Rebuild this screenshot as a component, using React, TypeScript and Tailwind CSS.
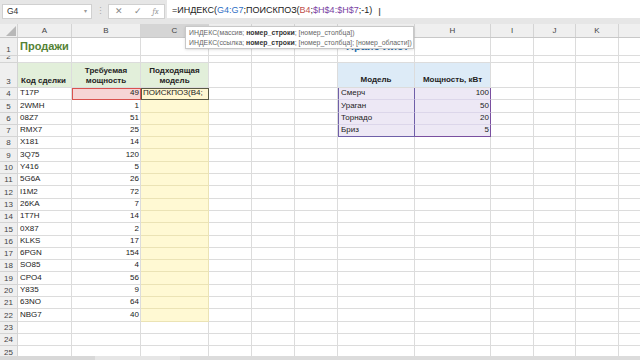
import React from 'react';

const sales: [string, number][] = [
  ['T17P', 49],
  ['2WMH', 1],
  ['08Z7', 51],
  ['RMX7', 25],
  ['X181', 14],
  ['3Q75', 120],
  ['Y416', 5],
  ['5G6A', 26],
  ['I1M2', 72],
  ['26KA', 7],
  ['1T7H', 14],
  ['0X87', 2],
  ['KLKS', 17],
  ['6PGN', 154],
  ['SO85', 4],
  ['CPO4', 56],
  ['Y835', 9],
  ['63NO', 64],
  ['NBG7', 40],
];

const prices: [string, number][] = [
  ['Смерч', 100],
  ['Ураган', 50],
  ['Торнадо', 20],
  ['Бриз', 5],
];

const cols = ['A', 'B', 'C', 'D', 'E', 'F', 'G', 'H', 'I', 'J', 'K', 'L'];
const colWidths = [54, 69, 68, 43, 43, 43, 77, 76, 43, 42, 43, 60];

function rowHeight(r: number) {
  if (r === 1) return 18;
  if (r === 2) return 7;
  if (r === 3) return 25;
  return 12.3;
}

function Cell({ r, c }: { r: number; c: number }) {
  const col = cols[c];
  const w = colWidths[c];
  let cls = 'border-r border-b border-[#dcdcdc] bg-white';
  let content: React.ReactNode = null;
  const base = 'h-full overflow-visible whitespace-nowrap flex items-end';

  if (r === 1 && col === 'A') {
    content = (
      <div className={`${base} pl-[2px] pb-[1px] text-[11px] font-bold text-[#548235]`}>Продажи</div>
    );
  }
  if (r === 1 && col === 'G') {
    content = (
      <div className={`${base} pl-[8px] pb-[1px] text-[11px] font-bold text-[#2e75b6]`}>Прайс-лист</div>
    );
  }
  if (r === 3 && (col === 'A' || col === 'B' || col === 'C')) {
    cls = 'border-r border-b border-[#dcdcdc] bg-[#e2efda]';
    const label =
      col === 'A' ? 'Код сделки' : col === 'B' ? 'Требуемая\nмощность' : 'Подходящая\nмодель';
    content = (
      <div
        className={`h-full flex items-end pb-[1px] text-[8px] font-bold leading-[10px] text-[#222] whitespace-pre ${
          col === 'A' ? 'pl-[3px]' : 'justify-center text-center'
        }`}
      >
        {label}
      </div>
    );
  }
  if (r === 3 && (col === 'G' || col === 'H')) {
    cls = 'border-r border-b border-[#dcdcdc] bg-[#ddebf7]';
    content = (
      <div className="h-full flex items-end justify-center pb-[1px] text-[8px] font-bold text-[#222]">
        {col === 'G' ? 'Модель' : 'Мощность, кВт'}
      </div>
    );
  }
  const si = r - 4;
  if (si >= 0 && si < sales.length) {
    if (col === 'A') {
      content = <div className={`${base} pl-[2px] text-[8px] text-[#222]`}>{sales[si][0]}</div>;
    }
    if (col === 'B') {
      if (si === 0) cls = 'border border-[#d9534f] bg-[#f6d5d5]';
      content = (
        <div className={`${base} justify-end pr-[1px] text-[8px] text-[#222]`}>{sales[si][1]}</div>
      );
    }
    if (col === 'C') {
      if (si === 0) {
        cls = 'border border-[#5a5a45] bg-[#fff7d1] relative z-10';
        content = <div className={`${base} pl-[1px] text-[8px] text-[#222]`}>ПОИСКПОЗ(B4;</div>;
      } else {
        cls = 'border-r border-b border-[#ebe3b5] bg-[#fff9d3]';
      }
    }
  }
  const pi = r - 4;
  if (pi >= 0 && pi < prices.length && (col === 'G' || col === 'H')) {
    const last = pi === prices.length - 1;
    if (col === 'G') {
      cls = `border-l border-r border-[#6f5fa8] bg-[#ede8f5] ${last ? 'border-b' : 'border-b border-b-[#dcd6ea]'}`;
      content = <div className={`${base} pl-[2px] text-[8px] text-[#222]`}>{prices[pi][0]}</div>;
    } else {
      cls = `border-r border-[#7a4fa0] bg-[#ede8f5] ${last ? 'border-b' : 'border-b border-b-[#dcd6ea]'}`;
      content = (
        <div className={`${base} justify-end pr-[1px] text-[8px] text-[#222]`}>{prices[pi][1]}</div>
      );
    }
  }
  return (
    <div className={`${cls} box-border shrink-0`} style={{ width: w, height: rowHeight(r) }}>
      {content}
    </div>
  );
}

function RowHeader({ r }: { r: number }) {
  return (
    <div
      className="w-[18px] shrink-0 bg-[#efefef] border-r border-b border-[#d4d4d4] flex items-end justify-center text-[8px] leading-[10px] text-[#444] overflow-hidden box-border"
      style={{ height: rowHeight(r) }}
    >
      {r}
    </div>
  );
}

export default function App() {
  const rows = Array.from({ length: 25 }, (_, i) => i + 1);
  return (
    <div
      className="w-[640px] h-[360px] overflow-hidden relative bg-white"
      style={{ fontFamily: '"Liberation Sans", Arial, sans-serif' }}
    >
      {/* formula bar */}
      <div className="h-[24px] bg-[#e6e6e6] flex items-start pt-[4px] gap-0">
        <div className="ml-[2px] w-[90px] h-[15px] bg-white border border-[#d0d0d0] flex items-center justify-between px-[4px] text-[8.5px] text-[#333]">
          <span>G4</span>
          <span className="text-[6px] text-[#999]">▾</span>
        </div>
        <div className="w-[16px] h-[15px] flex items-center justify-center text-[9px] text-[#aaa]">⋮</div>
        <div className="w-[57px] h-[15px] bg-white border border-[#d0d0d0] flex items-center justify-around text-[9px] text-[#888]">
          <span>✕</span>
          <span>✓</span>
          <span className="italic font-serif text-[8px] text-[#999]">fx</span>
        </div>
        <div className="flex-1 ml-[2px] h-[18px] -mt-[4px] pt-[4px] bg-white flex items-center pl-[5px] text-[9px] text-[#222] relative">
          <span>=ИНДЕКС(</span>
          <span className="text-[#2f6fc4]">G4:G7</span>
          <span>;ПОИСКПОЗ(</span>
          <span className="text-[#c0504d]">B4</span>
          <span>;</span>
          <span className="text-[#7a3fa3]">$H$4:$H$7</span>
          <span>;-1)</span>
          <span className="absolute left-[211px] top-[4px] text-[11px] text-[#555] font-light">I</span>
        </div>
      </div>

      {/* column headers */}
      <div className="flex h-[13px] bg-[#efefef] border-b border-[#c8c8c8] box-content">
        <div className="w-[18px] shrink-0 border-r border-[#d4d4d4] relative">
          <svg width="12" height="10" className="absolute right-[1px] bottom-[1px]">
            <polygon points="12,0 12,10 2,10" fill="#b8b8b8" />
          </svg>
        </div>
        {cols.map((c, i) => (
          <div
            key={c}
            className={`shrink-0 border-r border-[#d4d4d4] flex items-center justify-center text-[8px] text-[#444] ${
              c === 'C' ? 'bg-[#d5d5d5] text-[#222]' : ''
            }`}
            style={{ width: colWidths[i] }}
          >
            {c}
          </div>
        ))}
      </div>

      {/* grid */}
      <div className="flex flex-col">
        {rows.map((r) => (
          <div key={r} className="flex">
            <RowHeader r={r} />
            {cols.map((_, c) => (
              <Cell key={c} r={r} c={c} />
            ))}
          </div>
        ))}
      </div>

      {/* tooltip */}
      <div className="absolute left-[185px] top-[26px] w-[229px] h-[23px] bg-white border border-[#c8c8c8] px-[3px] py-[1px] text-[6.9px] leading-[10px] text-[#666] z-20 shadow-sm whitespace-nowrap overflow-hidden">
        <div>
          ИНДЕКС(массив; <b className="text-[#333]">номер_строки</b>; [номер_столбца])
        </div>
        <div>
          ИНДЕКС(ссылка; <b className="text-[#333]">номер_строки</b>; [номер_столбца]; [номер_области])
        </div>
      </div>

      {/* bottom scroll strip */}
      <div className="absolute left-0 right-0 bottom-0 h-[4px] bg-[#e6e6e6] flex">
        <div className="w-[95px] bg-[#d8d8d8]" />
        <div className="w-[85px]" />
        <div className="flex-1 bg-[#dcdcdc]" />
      </div>
    </div>
  );
}
